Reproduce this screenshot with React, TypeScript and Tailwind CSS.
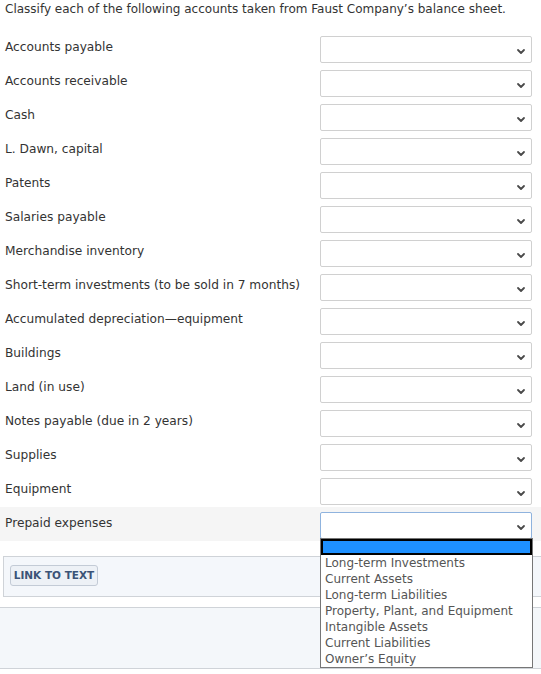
import React from "react";

const labels = [
  "Accounts payable",
  "Accounts receivable",
  "Cash",
  "L. Dawn, capital",
  "Patents",
  "Salaries payable",
  "Merchandise inventory",
  "Short-term investments (to be sold in 7 months)",
  "Accumulated depreciation\u2014equipment",
  "Buildings",
  "Land (in use)",
  "Notes payable (due in 2 years)",
  "Supplies",
  "Equipment",
  "Prepaid expenses",
];

const options = [
  "Long-term Investments",
  "Current Assets",
  "Long-term Liabilities",
  "Property, Plant, and Equipment",
  "Intangible Assets",
  "Current Liabilities",
  "Owner\u2019s Equity",
];

function Chevron() {
  return (
    <svg width="10" height="7" viewBox="0 0 10 7" className="absolute right-[5px] top-[11px]">
      <path d="M2 2 L5 5 L8 2" fill="none" stroke="#4a4a4a" strokeWidth="1.8" strokeLinecap="round" strokeLinejoin="round" />
    </svg>
  );
}

export default function App() {
  return (
    <div
      className="relative w-[541px] h-[674px] bg-white text-[#333] overflow-hidden"
      style={{ fontFamily: '"DejaVu Sans", Verdana, sans-serif' }}
    >
      <div className="px-[5px] pt-[1px] text-[12px] leading-[16px] h-[31px] whitespace-nowrap">
        Classify each of the following accounts taken from Faust Company’s balance sheet.
      </div>
      <div>
        {labels.map((l, i) => {
          const last = i === labels.length - 1;
          return (
            <div
              key={l}
              className={`flex justify-between h-[34px] ${last ? "bg-[#f5f5f5]" : ""}`}
            >
              <div className="pl-[5px] pt-[8px] text-[12.2px] leading-[16px] whitespace-nowrap">{l}</div>
              <div
                className={`relative mt-[5px] mr-[9px] w-[212px] h-[27px] rounded-[2px] bg-white border ${
                  last ? "border-[#8fb3de]" : "border-[#d0d0d0]"
                }`}
              >
                <Chevron />
              </div>
            </div>
          );
        })}
      </div>
      <div className="mt-[15px] ml-[3px] h-[41px] border border-r-0 border-[#cfd3d8] bg-[#f4f7fb] pt-[5px] pl-[6px]">
        <div className="inline-flex items-center justify-center w-[88px] h-[21px] rounded-[3px] border border-[#c3cbd6] bg-[#edf1f6] text-[10.5px] font-bold text-[#3b5377]">
          LINK TO TEXT
        </div>
      </div>
      <div className="mt-[10px] h-[62px] border-t border-b border-[#cfd3d8] bg-[#f4f7fa]" />

      <div className="absolute left-[320px] top-[538px] w-[213px] h-[130px] border border-[#767676] bg-white">
        <div className="h-[16px] bg-[#1e90ff] border-2 border-black" />
        {options.map((o) => (
          <div key={o} className="h-[16px] pl-[4px] text-[12px] leading-[16px] text-[#555]">
            {o}
          </div>
        ))}
      </div>
    </div>
  );
}
